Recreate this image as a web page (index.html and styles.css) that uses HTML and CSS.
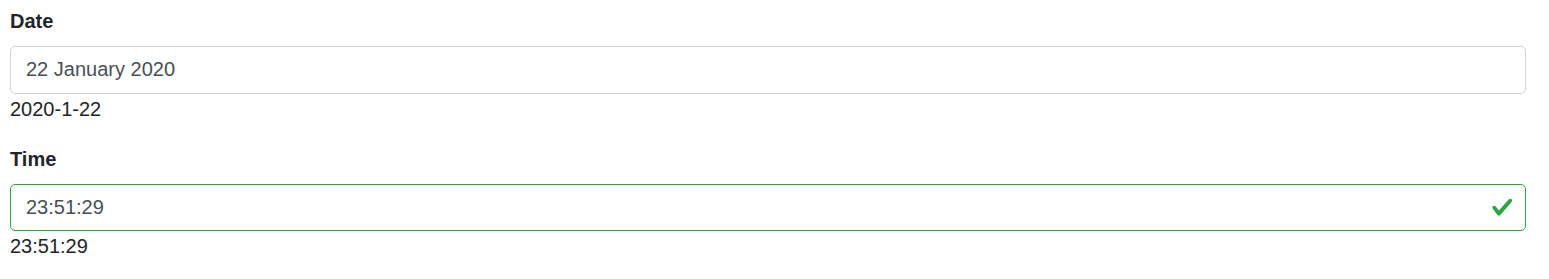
FILE: index.html
```html
<!DOCTYPE html>
<html>
<head>
<meta charset="utf-8">
<link rel="stylesheet" href="styles.css">
</head>
<body>
<div class="page">
  <div class="form-group">
    <label class="label" for="d">Date</label>
    <input id="d" class="control" type="text" value="22 January 2020">
    <div class="output">2020-1-22</div>
  </div>
  <div class="form-group">
    <label class="label" for="t">Time</label>
    <div class="field">
      <input id="t" class="control valid" type="text" value="23:51:29">
      <svg class="check" viewBox="0 0 8 8" width="22.5" height="22.5"><path fill="#28a745" d="M2.3 6.73L.6 4.53c-.4-1.04.46-1.4 1.1-.8l1.1 1.4 3.4-3.8c.6-.63 1.6-.27 1.2.7l-4 4.6c-.43.5-.8.4-1.1.1z"/></svg>
    </div>
    <div class="output">23:51:29</div>
  </div>
</div>
</body>
</html>
```
FILE: styles.css
```css
html, body {
  margin: 0;
  padding: 0;
  background: #fff;
}
body {
  font-family: "Liberation Sans", Arial, sans-serif;
  font-size: 20px;
  line-height: 30px;
  color: #212529;
}
.page {
  padding: 6px 0 0 10px;
  width: 1515.5px;
}
.form-group {
  margin-bottom: 20px;
}
.label {
  display: block;
  font-weight: bold;
  margin-bottom: 10px;
}
.field {
  position: relative;
}
.control {
  display: block;
  box-sizing: border-box;
  width: 100%;
  height: 47.5px;
  margin: 0;
  padding: 7.5px 15px;
  font-family: inherit;
  font-size: 20px;
  line-height: 30px;
  color: #495057;
  background: #fff;
  border: 1.25px solid #ced4da;
  border-radius: 5px;
  outline: none;
}
.control.valid {
  border-color: #28a745;
  padding-right: 47px;
}
.check {
  position: absolute;
  right: 12.5px;
  top: 12.5px;
}
.output {
  line-height: 30px;
}
```
